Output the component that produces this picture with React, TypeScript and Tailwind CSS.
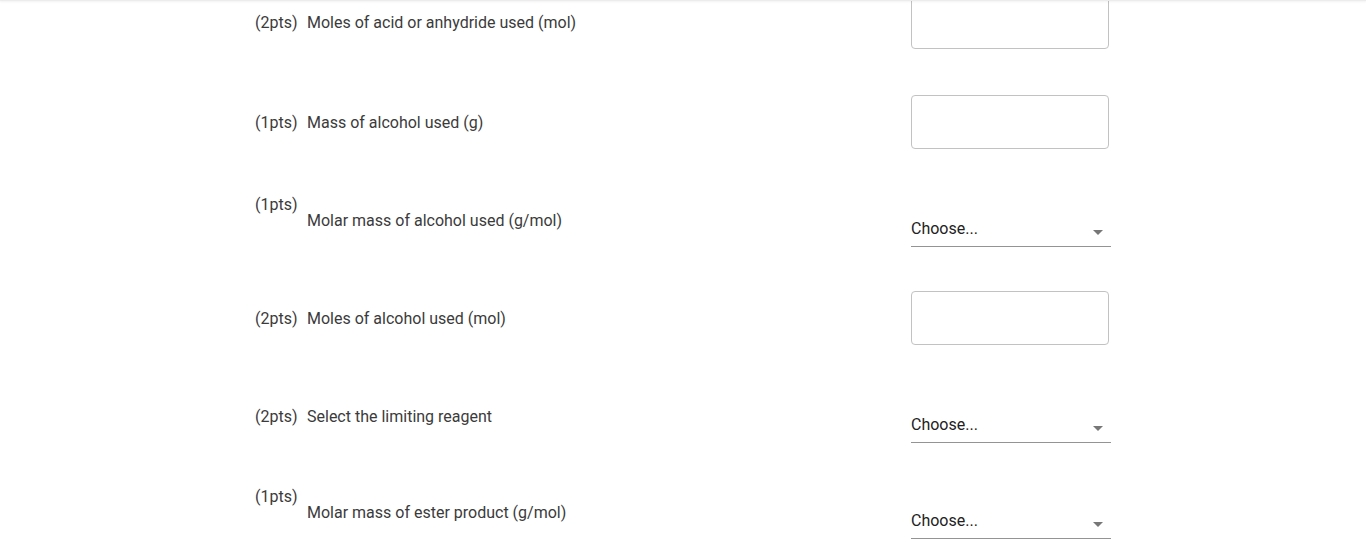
import React from 'react';

type Row = {
  pts: string;
  question: string;
  kind: 'input' | 'select';
  stacked?: boolean;
  mt: string;
};

const ROWS: Row[] = [
  { pts: '(2pts)', question: 'Moles of acid or anhydride used (mol)', kind: 'input', mt: 'mt-[-5px]' },
  { pts: '(1pts)', question: 'Mass of alcohol used (g)', kind: 'input', mt: 'mt-[46px]' },
  { pts: '(1pts)', question: 'Molar mass of alcohol used (g/mol)', kind: 'select', stacked: true, mt: 'mt-[43px]' },
  { pts: '(2pts)', question: 'Moles of alcohol used (mol)', kind: 'input', mt: 'mt-[44px]' },
  { pts: '(2pts)', question: 'Select the limiting reagent', kind: 'select', mt: 'mt-[59px]' },
  { pts: '(1pts)', question: 'Molar mass of ester product (g/mol)', kind: 'select', stacked: true, mt: 'mt-[41px]' },
];

function TextBox() {
  return <div className="w-[198px] h-[54px] border border-[#c2c2c2] rounded-[4px] bg-white" />;
}

function Choose({ offset }: { offset: string }) {
  return (
    <div className={`${offset} w-[200px] h-[36px] border-b border-[#949494] flex items-center justify-between pr-[8px]`}>
      <span className="text-[16px] text-[#222]">Choose...</span>
      <svg width="10" height="5" viewBox="0 0 10 5" className="mt-[7px]">
        <path d="M0 0 L10 0 L5 5 Z" fill="#777" />
      </svg>
    </div>
  );
}

export default function App() {
  return (
    <div className="min-h-screen bg-white overflow-hidden" style={{ fontFamily: 'Roboto, "Liberation Sans", sans-serif' }}>
      {/* header shadow peeking from above */}
      <div className="fixed top-0 left-0 right-0 h-[1px] bg-[#ececec] shadow-[0_1px_2px_rgba(0,0,0,0.08)] z-10" />

      <div className="mx-auto w-[856px] flex flex-col pb-10">
        {ROWS.map((r, i) => (
          <div key={i} className={`${r.mt} flex items-start justify-between`}>
            {r.kind === 'input' ? (
              <div className="flex mt-[16px] text-[16px] leading-[24px] text-[#3b3b3b]">
                <span className="w-[52px]">{r.pts}</span>
                <span>{r.question}</span>
              </div>
            ) : (
              <div className="flex pt-[1px] text-[16px] leading-[24px] text-[#3b3b3b]">
                <span className="w-[52px]">{r.pts}</span>
                <span className={r.stacked ? 'pt-[16px]' : ''}>{r.question}</span>
              </div>
            )}
            <div className="w-[200px]">
              {r.kind === 'input' ? (
                <TextBox />
              ) : (
                <Choose offset={r.stacked ? 'mt-[19px]' : 'mt-[3px]'} />
              )}
            </div>
          </div>
        ))}
      </div>
    </div>
  );
}
